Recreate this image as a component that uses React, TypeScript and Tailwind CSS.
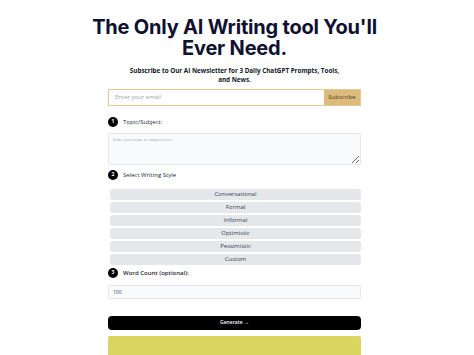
import { useState } from 'react';

const STYLES = ['Conversational', 'Formal', 'Informal', 'Optimistic', 'Pessimistic', 'Custom'];

function Step({ n, label, strong }: { n: number; label: string; strong?: boolean }) {
  return (
    <div className="flex items-center gap-[5px]">
      <span className="flex h-[10px] w-[10px] items-center justify-center rounded-full bg-black text-[5px] font-bold text-white">
        {n}
      </span>
      <span className={`text-[6px] text-[#1f2937] ${strong ? 'font-semibold' : ''}`}>{label}</span>
    </div>
  );
}

export default function App() {
  const [style, setStyle] = useState('');
  const [count, setCount] = useState('100');

  return (
    <div className="h-[355px] w-full overflow-hidden bg-white pr-[5px] font-['Open_Sans',sans-serif]">
      <div className="mx-auto flex w-[253px] flex-col pt-[17px]">
        <h1 className="mx-[-30px] text-center font-['Inter',sans-serif] text-[20px] font-bold leading-[21px] tracking-[-0.01em] text-[#0f1130]">
          The Only AI Writing tool You'll Ever Need.
        </h1>
        <p className="mx-auto mt-[7px] w-[214px] text-center text-[6.3px] font-bold leading-[9px] text-[#111827]">
          Subscribe to Our AI Newsletter for 3 Daily ChatGPT Prompts, Tools, and News.
        </p>

        {/* Newsletter */}
        <div className="mt-[5px] flex h-[17px] border border-[#e2c891]">
          <input
            className="min-w-0 flex-1 bg-white px-[6px] text-[6px] text-gray-700 outline-none placeholder:text-[#9ca3af]"
            placeholder="Enter your email"
          />
          <button className="w-[36px] bg-[#dcbb7d] text-[6px] text-[#4b3a1c]">Subscribe</button>
        </div>

        {/* Topic */}
        <div className="mt-[11px]">
          <Step n={1} label="Topic/Subject:" />
        </div>
        <textarea
          className="mt-[6px] h-[32px] resize-y rounded-[2px] border border-[#e5e7eb] bg-[#f9fafb] px-[4px] py-[3px] text-[4px] outline-none placeholder:text-[#9ca3af]"
          placeholder="Enter your topic or subject here"
        />

        {/* Writing style */}
        <div className="mt-[5px]">
          <Step n={2} label="Select Writing Style" />
        </div>
        <div className="ml-[2px] mt-[9px] flex flex-col gap-[2px]">
          {STYLES.map((s) => (
            <button
              key={s}
              onClick={() => setStyle(s)}
              className={`h-[11px] rounded-[3px] text-[6px] leading-[11px] text-[#374151] ${
                style === s ? 'bg-[#d1d5db]' : 'bg-[#e5e7eb]'
              }`}
            >
              {s}
            </button>
          ))}
        </div>

        {/* Word count */}
        <div className="mt-[3px]">
          <Step n={3} label="Word Count (optional):" strong />
        </div>
        <input
          value={count}
          onChange={(e) => setCount(e.target.value)}
          className="mt-[7px] h-[14px] rounded-[2px] border border-[#e5e7eb] bg-[#f9fafb] px-[4px] text-[5px] text-[#374151] outline-none"
        />

        <button className="mt-[17px] h-[14px] rounded-[4px] bg-black text-[5px] font-semibold text-white">
          Generate →
        </button>

        <div className="mt-[6px] h-[40px] rounded-t-[2px] bg-[#d9d55f]" />
      </div>
    </div>
  );
}
